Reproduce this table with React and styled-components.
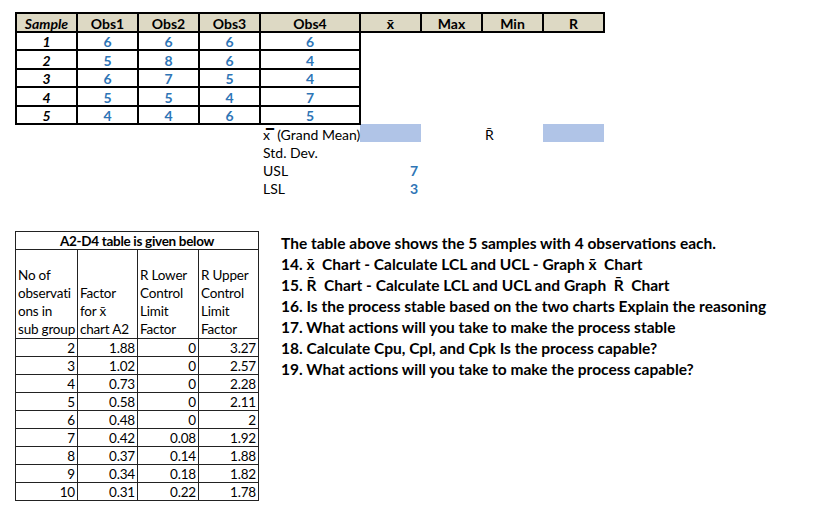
import React from 'react';
import styled, { createGlobalStyle } from 'styled-components';

const GlobalStyle = createGlobalStyle`
  body {
    margin: 0;
    background: #fff;
    color: #000;
    font-family: Lato, 'Open Sans', sans-serif;
  }
`;

const BLUE = '#2e75b6';
const TAN = '#ddd9c4';
const FILL = '#b0c4e7';

const Page = styled.div`
  width: 815px;
  height: 507px;
  overflow: hidden;
  box-sizing: border-box;
  padding: 12px 0 0 15px;
  display: flex;
  flex-direction: column;
`;

const SheetTable = styled.table`
  border-collapse: collapse;
  table-layout: fixed;
  width: ${(p) => p.$width}px;
  font-size: 14px;
`;

const Row = styled.tr`
  height: ${(p) => p.$h}px;
`;

const Cell = styled.td`
  padding: 0 3px;
  border: ${(p) => (p.$boxed ? '2px solid #000' : 'none')};
  background: ${(p) => p.$bg || 'transparent'};
  color: ${(p) => (p.$blue ? BLUE : '#000')};
  font-weight: ${(p) => (p.$bold ? 700 : 400)};
  font-style: ${(p) => (p.$italic ? 'italic' : 'normal')};
  text-align: ${(p) => p.$align || 'left'};
  vertical-align: bottom;
  line-height: 15px;
  white-space: pre;
  overflow: visible;
`;

const Lower = styled.div`
  display: flex;
  align-items: flex-start;
  margin-top: 35px;
`;

const FactorTable = styled.table`
  border-collapse: collapse;
  table-layout: fixed;
  width: 243px;
  font-size: 13.5px;
  letter-spacing: -0.2px;
  flex: none;
`;

const FCell = styled.td`
  padding: 0 2px;
  border: 1px solid #222;
  text-align: ${(p) => p.$align || 'right'};
  vertical-align: bottom;
  line-height: ${(p) => (p.$tall ? 18 : 15)}px;
  white-space: nowrap;
  overflow: hidden;
`;

const TitleCell = styled(FCell)`
  text-align: center;
  font-weight: 700;
  font-size: 13.5px;
  letter-spacing: -0.3px;
`;

const Questions = styled.div`
  margin-left: 22px;
  padding-top: 2px;
  font-size: 15.5px;
  font-weight: 700;
  line-height: 21px;
  white-space: pre;
`;

const XBAR = 'x\u0304';
const XDBAR = 'x\u033F';
const RBAR = 'R\u0304';

const topCols = [61, 61, 61, 61, 100, 61, 61, 61, 61];
const headers = ['Obs1', 'Obs2', 'Obs3', 'Obs4', XBAR, 'Max', 'Min', 'R'];
const samples = [
  [6, 6, 6, 6],
  [5, 8, 6, 4],
  [6, 7, 5, 4],
  [5, 5, 4, 7],
  [4, 4, 6, 5],
];

const factors = [
  [2, '1.88', '0', '3.27'],
  [3, '1.02', '0', '2.57'],
  [4, '0.73', '0', '2.28'],
  [5, '0.58', '0', '2.11'],
  [6, '0.48', '0', '2'],
  [7, '0.42', '0.08', '1.92'],
  [8, '0.37', '0.14', '1.88'],
  [9, '0.34', '0.18', '1.82'],
  [10, '0.31', '0.22', '1.78'],
];

const questions = [
  'The table above shows the 5 samples with 4 observations each.',
  `14. ${XBAR}  Chart - Calculate LCL and UCL - Graph ${XBAR}  Chart`,
  `15. ${RBAR}  Chart - Calculate LCL and UCL and Graph  ${RBAR}  Chart`,
  '16. Is the process stable based on the two charts Explain the reasoning',
  '17. What actions will you take to make the process stable',
  '18. Calculate Cpu, Cpl, and Cpk Is the process capable?',
  '19. What actions will you take to make the process capable?',
];

function Lines({ items }) {
  return items.map((t, i) => (
    <React.Fragment key={i}>
      {i > 0 && <br />}
      {t}
    </React.Fragment>
  ));
}

export default function App() {
  return (
    <Page>
      <GlobalStyle />
      <SheetTable $width={588}>
        <colgroup>
          {topCols.map((w, i) => (
            <col key={i} style={{ width: w }} />
          ))}
        </colgroup>
        <tbody>
          <Row $h={19}>
            <Cell $boxed $bold $italic $align="center" $bg={TAN}>Sample</Cell>
            {headers.map((h) => (
              <Cell key={h} $boxed $bold $align="center" $bg={TAN}>{h}</Cell>
            ))}
          </Row>
          {samples.map((obs, i) => (
            <Row key={i} $h={18.4}>
              <Cell $boxed $bold $italic $align="center">{i + 1}</Cell>
              {obs.map((v, j) => (
                <Cell key={j} $boxed $bold $blue $align="center">{v}</Cell>
              ))}
              <Cell colSpan={4} />
            </Row>
          ))}
          <Row $h={18}>
            <Cell colSpan={4} />
            <Cell>{XDBAR}  (Grand Mean)</Cell>
            <Cell $bg={FILL} />
            <Cell />
            <Cell>{RBAR}</Cell>
            <Cell $bg={FILL} />
          </Row>
          <Row $h={18}>
            <Cell colSpan={4} />
            <Cell>Std. Dev.</Cell>
            <Cell colSpan={4} />
          </Row>
          <Row $h={18}>
            <Cell colSpan={4} />
            <Cell>USL</Cell>
            <Cell $bold $blue $align="right">7</Cell>
            <Cell colSpan={3} />
          </Row>
          <Row $h={18}>
            <Cell colSpan={4} />
            <Cell>LSL</Cell>
            <Cell $bold $blue $align="right">3</Cell>
            <Cell colSpan={3} />
          </Row>
        </tbody>
      </SheetTable>

      <Lower>
        <FactorTable>
          <colgroup>
            <col style={{ width: 62 }} />
            <col style={{ width: 60 }} />
            <col style={{ width: 61 }} />
            <col style={{ width: 60 }} />
          </colgroup>
          <tbody>
            <Row $h={18}>
              <TitleCell colSpan={4}>A2-D4 table is given below</TitleCell>
            </Row>
            <Row $h={89}>
              <FCell $tall $align="left"><Lines items={['No of', 'observati', 'ons in', 'sub group']} /></FCell>
              <FCell $tall $align="left"><Lines items={['Factor', `for  ${XBAR}`, 'chart A2']} /></FCell>
              <FCell $tall $align="left"><Lines items={['R Lower', 'Control', 'Limit', 'Factor']} /></FCell>
              <FCell $tall $align="left"><Lines items={['R Upper', 'Control', 'Limit', 'Factor']} /></FCell>
            </Row>
            {factors.map((r) => (
              <Row key={r[0]} $h={18}>
                {r.map((v, j) => (
                  <FCell key={j}>{v}</FCell>
                ))}
              </Row>
            ))}
          </tbody>
        </FactorTable>
        <Questions>
          <Lines items={questions} />
        </Questions>
      </Lower>
    </Page>
  );
}
